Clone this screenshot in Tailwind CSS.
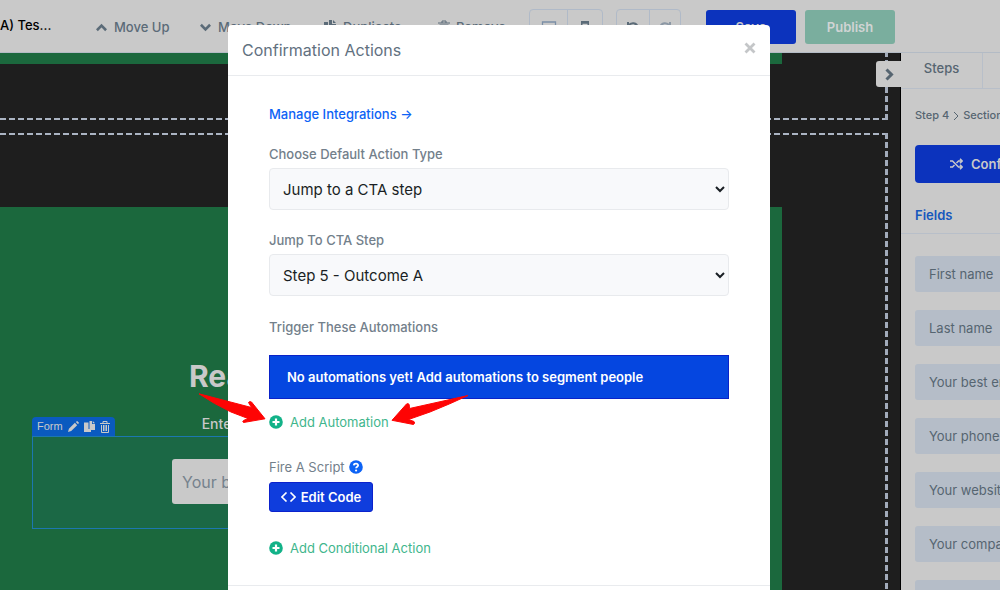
<!DOCTYPE html>
<html lang="en">

<head>
  <meta charset="UTF-8">
  <meta name="viewport" content="width=device-width, initial-scale=1.0">
  <title>Confirmation Actions</title>
  <script src="https://cdn.jsdelivr.net/npm/@tailwindcss/browser@4"></script>
</head>

<body class="h-screen overflow-hidden bg-[#1e1e1e] font-['Inter','Liberation_Sans',sans-serif] text-sm">

  <!-- Editor -->
  <div class="flex h-full flex-col">

    <!-- Toolbar -->
    <header class="flex h-[53px] shrink-0 items-center overflow-hidden border-b border-[#b3bbc5] bg-[#c9c9c9] pt-[2px] font-medium text-[#5b6b78]">
      <span class="w-24 shrink-0 pb-1 text-[13px] text-black">A) Tes...</span>
      <button class="flex w-[104px] shrink-0 items-center gap-[7px] text-[13px]">
        <svg class="size-[11px]" viewBox="0 0 12 12" fill="none" stroke="currentColor" stroke-width="2.8"><path d="M1 9l5-5 5 5" /></svg>
        Move Up
      </button>
      <button class="flex w-[124px] shrink-0 items-center gap-[7px] text-[13px]">
        <svg class="size-[11px]" viewBox="0 0 12 12" fill="none" stroke="currentColor" stroke-width="2.8"><path d="M1 3l5 5 5-5" /></svg>
        Move Down
      </button>
      <button class="flex w-[114px] shrink-0 items-center gap-[7px] text-[13px]">
        <svg class="h-[14px] w-3" viewBox="0 0 12 14" fill="currentColor"><path d="M0 2h4v8h3v3H0zM5 0h3v4h4v6H5zM9 0l3 3H9z" /></svg>
        Duplicate
      </button>
      <button class="flex w-[91px] shrink-0 items-center gap-[6px] text-[13px]">
        <svg class="h-[14px] w-3" viewBox="0 0 12 14" fill="none" stroke="currentColor"><path d="M0 3h12M4 3V1h4v2M1.500 5h9v8h-9zM4 6v6M6 6v6M8 6v6" /></svg>
        Remove
      </button>
      <div class="flex h-9 w-[74px] shrink-0 rounded-sm border border-[#b0bac8]">
        <button class="flex flex-1 items-center justify-center border-r border-[#b0bac8]" aria-label="Desktop">
          <svg class="h-3 w-4" viewBox="0 0 16 12" fill="none" stroke="#7b8fa6" stroke-width="1.300"><path d="M1.500 1h13v8h-13zM5 11.500h6" /></svg>
        </button>
        <button class="flex w-[34px] items-center justify-center" aria-label="Mobile">
          <svg class="h-[13px] w-2" viewBox="0 0 8 13" fill="none" stroke="currentColor" stroke-width="1.500"><path d="M.75.75h6.500v11.500H.75zM1 2h6" /></svg>
        </button>
      </div>
      <div class="ml-[13px] flex h-9 w-[65px] shrink-0 rounded-sm border border-[#b0bac8]">
        <button class="flex flex-1 items-center justify-center border-r border-[#b0bac8]" aria-label="Undo">
          <svg class="size-3" viewBox="0 0 12 12" fill="none" stroke="currentColor" stroke-width="2"><path d="M1 1v4h4M1.500 4.500C4 1 10 1.500 10.500 6S6 11.500 3 10" /></svg>
        </button>
        <button class="flex w-[30px] items-center justify-center text-[#8c98a5]" aria-label="Redo">
          <svg class="size-3" viewBox="0 0 12 12" fill="none" stroke="currentColor" stroke-width="2"><path d="M11 1v4H7M10.500 4.500C8 1 2 1.500 1.500 6S6 11.500 9 10" /></svg>
        </button>
      </div>
      <button class="ml-[25px] h-[34px] w-[90px] shrink-0 rounded-[3px] bg-[#0c33bd] text-[13px] font-semibold text-[#c9c9c9]">Save</button>
      <button class="ml-[9px] h-[34px] w-[90px] shrink-0 rounded-[3px] bg-[#7aae9e] text-[13px] font-semibold text-[#d0d4d4]">Publish</button>
    </header>

    <div class="flex min-h-0 flex-1">

      <!-- Canvas -->
      <main class="flex min-w-0 flex-1 flex-col border-r border-black">
        <section class="flex h-[67px] shrink-0 pr-3">
          <div class="flex flex-1 flex-col">
            <div class="flex-1 pr-[103px]">
              <div class="h-[11px] bg-[#1b683d]"></div>
            </div>
            <div class="h-[2px] bg-[repeating-linear-gradient(90deg,#abb4c3_0_6px,#1e1e1e_6px_9px)]"></div>
          </div>
          <div class="w-[3px] bg-[repeating-linear-gradient(0deg,#a2abba_0_6px,#1e1e1e_6px_9px)]"></div>
        </section>

        <section class="mt-[13px] flex min-h-0 flex-1 pr-3">
          <div class="flex min-w-0 flex-1 flex-col">
            <div class="h-[2px] shrink-0 bg-[repeating-linear-gradient(90deg,#abb4c3_0_6px,#1e1e1e_6px_9px)]"></div>
            <div class="mt-[72px] mr-[103px] flex-1 bg-[#1b683d] px-8 pt-[151px] text-[#c9c9c9]">
              <h1 class="pl-[157px] text-[30px] leading-9 font-bold">Ready</h1>
              <div class="mt-3 flex h-[30px] items-end">
                <div class="flex h-[19px] items-center gap-[5px] rounded-t-sm bg-[#0a5abf] px-[5px] text-[11px]">
                  <span class="font-['Liberation_Sans',sans-serif]">Form</span>
                  <button aria-label="Edit"><svg class="size-[11px]" viewBox="0 0 12 12" fill="currentColor"><path d="M0 12l1-3.500L7.500 2 10 4.500 3.500 11zM8.500 1L10 0l2 2-1 1.500z" /></svg></button>
                  <button aria-label="Copy"><svg class="size-[11px]" viewBox="0 0 11 11" fill="currentColor"><path d="M0 1.500h4.500v6.500h2.500V11H0zM5.500 0H8v3h3v6H5.500zM8.800 0L11 2.200H8.800z" /></svg></button>
                  <button aria-label="Delete"><svg class="h-3 w-[10px]" viewBox="0 0 10 12" fill="none" stroke="currentColor"><path d="M0 2.500h10M3 2V.5h4V2M1.500 4v7.500h7V4M3.500 4v6M5 4v6M6.500 4v6" /></svg></button>
                </div>
                <p class="ml-[87px] pb-[2px] text-sm font-medium">Enter</p>
              </div>
              <div class="h-[93px] border border-[#1c77b0] bg-[#1b6845] px-[139px] pt-[22px]">
                <input type="text" aria-label="Email" placeholder="Your best email" class="block h-[45px] w-full rounded-[3px] bg-[#c9c9c9] px-[10px] text-base placeholder:text-[#76828d]">
              </div>
            </div>
          </div>
          <div class="w-[3px] bg-[repeating-linear-gradient(180deg,#a2abba_0_6px,#1e1e1e_6px_9px)]"></div>
        </section>
      </main>

      <!-- Sidebar -->
      <aside class="relative w-[99px] shrink-0 bg-[#c9c9c9] text-[13px] text-[#566571]">
        <button class="absolute top-2 -left-[25px] flex h-[26px] w-[26px] items-center justify-center rounded-l-[3px] bg-[#c9c9c9]" aria-label="Collapse">
          <svg class="ml-px h-[13px] w-[9px]" viewBox="0 0 9 13" fill="none" stroke="currentColor" stroke-width="3"><path d="M1.500 1.500l5 5-5 5" /></svg>
        </button>
        <div class="overflow-hidden whitespace-nowrap">
          <div class="flex h-9 border-b border-[#b8bfc9]">
            <button class="w-[82px] border-r border-[#b8bfc9] pb-1 font-medium">Steps</button>
          </div>
          <nav class="flex h-[53px] items-center gap-1 pl-[14px] text-[11px] font-medium">
            <span>Step 4</span>
            <svg class="h-2 w-[6px] shrink-0" viewBox="0 0 6 8" fill="none" stroke="currentColor"><path d="M1 0l4 4-4 4" /></svg>
            <span>Section</span>
          </nav>
          <button class="mt-[3px] ml-[14px] flex h-[38px] w-[220px] items-center gap-2 rounded bg-[#0c33bd] pl-[35px] font-semibold text-[#c9c9c9]">
            <svg class="h-3 w-[13px]" viewBox="0 0 13 12" fill="none" stroke="currentColor" stroke-width="1.500"><path d="M0 3h2.500l6 6H12M0 9h2.500L4.500 7M6.500 5l2-2H12M10 .8L12.200 3 10 5.200M10 6.800L12.200 9 10 11.200" /></svg>
            Confirmation
          </button>
          <h2 class="mt-5 h-[31px] border-b border-[#b8bfc9] pl-[14px] text-[13px] leading-6 font-semibold text-[#1657bd]">Fields</h2>
          <div class="mt-[22px] ml-[14px] flex w-[220px] flex-col gap-[18px]">
            <button class="h-9 rounded-[3px] bg-[#b5bdc8] pl-[14px] text-left">First name</button>
            <button class="h-9 rounded-[3px] bg-[#b5bdc8] pl-[14px] text-left">Last name</button>
            <button class="h-9 rounded-[3px] bg-[#b5bdc8] pl-[14px] text-left">Your best email</button>
            <button class="h-9 rounded-[3px] bg-[#b5bdc8] pl-[14px] text-left">Your phone</button>
            <button class="h-9 rounded-[3px] bg-[#b5bdc8] pl-[14px] text-left">Your website</button>
            <button class="h-9 rounded-[3px] bg-[#b5bdc8] pl-[14px] text-left">Your company</button>
            <button class="h-9 rounded-[3px] bg-[#b5bdc8] pl-[14px] text-left" aria-label="More"></button>
          </div>
        </div>
      </aside>
    </div>
  </div>

  <!-- Modal -->
  <div class="fixed inset-0 flex justify-center overflow-hidden pt-[25px] pr-[2px]">
    <div role="dialog" aria-labelledby="modal-title" class="h-[640px] w-[542px] shrink-0 rounded bg-white text-[13px]">
      <div class="flex h-[51px] items-center justify-between border-b border-[#e9ebee] px-[14px]">
        <h2 id="modal-title" class="text-base text-[#62717f]">Confirmation Actions</h2>
        <button class="pb-1" aria-label="Close">
          <svg class="size-3" viewBox="0 0 12 12" fill="none" stroke="#c4c6c8" stroke-width="2.800"><path d="M1.500 1.500l9 9M10.500 1.500l-9 9" /></svg>
        </button>
      </div>

      <div class="flex h-[510px] flex-col items-start border-b border-[#e9ebee] px-[41px] pt-7 leading-5">
        <a href="#" class="font-medium text-[#0d63f5]">Manage Integrations →</a>

        <label for="action-type" class="mt-5 font-medium text-[#73808b]">Choose Default Action Type</label>
        <select id="action-type" class="mt-1 h-[42px] w-full rounded border border-[#e8eaed] bg-[#f8f9fb] px-[9px] text-[15px] text-[#1a1f24]">
          <option>Jump to a CTA step</option>
        </select>

        <label for="cta-step" class="mt-5 font-medium text-[#73808b]">Jump To CTA Step</label>
        <select id="cta-step" class="mt-1 h-[42px] w-full rounded border border-[#e8eaed] bg-[#f8f9fb] px-[9px] text-[15px] text-[#1a1f24]">
          <option>Step 5 - Outcome A</option>
        </select>

        <h3 class="mt-[21px] font-medium text-[#73808b]">Trigger These Automations</h3>
        <div class="mt-[18px] flex h-11 w-full items-center border border-[#0a22c8] bg-[#0546e0] px-[17px] font-semibold text-white">No automations yet! Add automations to segment people</div>

        <button class="mt-[13px] flex items-center gap-[7px] text-[#3fb68d]">
          <svg class="size-[14px]" viewBox="0 0 14 14"><circle cx="7" cy="7" r="6.800" fill="#12b288" /><path d="M7 3.500v7M3.500 7h7" stroke="#fff" stroke-width="2.200" /></svg>
          Add Automation
        </button>

        <div class="mt-[25px] flex items-center gap-1 text-[#73808b]">
          Fire A Script
          <svg class="size-[14px]" viewBox="0 0 14 14"><circle cx="7" cy="7" r="6.800" fill="#0d63f5" /><path d="M4.800 5.300C5 3 9.300 3.200 9.100 5.400 9 6.800 7.100 6.500 7.100 8.300" fill="none" stroke="#fff" stroke-width="1.800" /><circle cx="7.100" cy="10.500" r="1.100" fill="#fff" /></svg>
        </div>
        <button class="mt-[5px] flex h-[30px] w-[104px] items-center justify-center gap-[5px] rounded-[3px] border border-[#0c22cc] bg-[#0f3ddd] font-semibold text-white">
          <svg class="h-[10px] w-[15px]" viewBox="0 0 15 10" fill="none" stroke="currentColor" stroke-width="1.600"><path d="M5.500.5L1 5l4.500 4.500M9.500.5L14 5 9.500 9.500" /></svg>
          Edit Code
        </button>

        <button class="mt-[26px] flex items-center gap-[7px] text-[#3fb68d]">
          <svg class="size-[14px]" viewBox="0 0 14 14"><circle cx="7" cy="7" r="6.800" fill="#12b288" /><path d="M7 3.500v7M3.500 7h7" stroke="#fff" stroke-width="2.200" /></svg>
          Add Conditional Action
        </button>
      </div>
    </div>
  </div>

  <!-- Arrows pointing at the add button -->
  <svg class="pointer-events-none absolute top-[390px] left-1/2 -ml-[304px] h-10 w-[276px]" viewBox="196 390 276 40" fill="#fe0404" stroke="#fe0404" stroke-linejoin="round">
    <path d="M199 393.800L251.500 407.500L248.500 402.500Q249.500 401 251.500 402L265 418.800L243.500 422.500Q242 421.500 243.500 420.500L248 418.500L231 412Q214 404 199 393.800z" />
    <path d="M468 395.500L409.500 408.500L409.200 404.500Q408 403 406.500 404L392 420.300L413.500 424.500Q415.500 423 414 421.500L408.500 419.500L430 412Q450 404 468 395.500z" />
  </svg>
</body>

</html>
